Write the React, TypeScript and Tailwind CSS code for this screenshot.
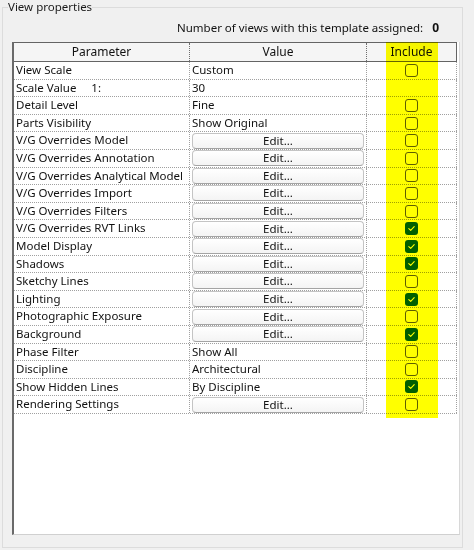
import React from "react";

type Row = { p: string; v: string; edit?: boolean; inc: null | boolean };

const rows: Row[] = [
  { p: "View Scale", v: "Custom", inc: false },
  { p: "Scale Value     1:", v: "30", inc: null },
  { p: "Detail Level", v: "Fine", inc: false },
  { p: "Parts Visibility", v: "Show Original", inc: false },
  { p: "V/G Overrides Model", v: "", edit: true, inc: false },
  { p: "V/G Overrides Annotation", v: "", edit: true, inc: false },
  { p: "V/G Overrides Analytical Model", v: "", edit: true, inc: false },
  { p: "V/G Overrides Import", v: "", edit: true, inc: false },
  { p: "V/G Overrides Filters", v: "", edit: true, inc: false },
  { p: "V/G Overrides RVT Links", v: "", edit: true, inc: true },
  { p: "Model Display", v: "", edit: true, inc: true },
  { p: "Shadows", v: "", edit: true, inc: true },
  { p: "Sketchy Lines", v: "", edit: true, inc: false },
  { p: "Lighting", v: "", edit: true, inc: true },
  { p: "Photographic Exposure", v: "", edit: true, inc: false },
  { p: "Background", v: "", edit: true, inc: true },
  { p: "Phase Filter", v: "Show All", inc: false },
  { p: "Discipline", v: "Architectural", inc: false },
  { p: "Show Hidden Lines", v: "By Discipline", inc: true },
  { p: "Rendering Settings", v: "", edit: true, inc: false },
];

function Check({ on }: { on: boolean }) {
  if (on) {
    return (
      <div className="w-[13px] h-[13px] rounded-[3px] bg-[#005fb8] flex items-center justify-center">
        <svg width="9" height="9" viewBox="0 0 9 9">
          <path d="M1.8 4.6 L3.7 6.4 L7.2 2.6" fill="none" stroke="#ffffff" strokeWidth="1.1" strokeLinecap="round" strokeLinejoin="round" />
        </svg>
      </div>
    );
  }
  return <div className="w-[13px] h-[13px] rounded-[3px] border border-[#5e5e5e] bg-white" />;
}

export default function App() {
  return (
    <div
      className="w-[474px] h-[550px] bg-[#f0f0f0] pl-[2px] text-[#111111] overflow-hidden"
      style={{ fontFamily: '"Noto Sans", "Open Sans", sans-serif' }}
    >
      <fieldset className="w-[461px] h-[548px] border border-[#dcdcdc] pl-[9px] pr-[2px]">
        <legend className="ml-[-4px] text-[11.5px] leading-[14px] text-[#1a1a1a]">View properties</legend>
        <div className="h-[28px] flex justify-end items-start pt-[6px] pr-[21px] text-[11.5px] leading-[16px]">
          <span>Number of views with this template assigned:</span>
          <span className="ml-[9px] font-bold text-[12px]">0</span>
        </div>
        <div className="relative w-[448px] h-[493px] bg-white border-l-2 border-l-[#6a6a6a] border-r border-r-[#d8d8d8] border-b border-b-[#d0d0d0] text-[11.5px]">
          <div className="flex w-[443px] h-[20px] border-t border-b border-r border-[#646464] bg-[#f5f5f5] leading-[18px] text-[12px]">
            <div className="w-[176px] border-r border-dotted border-[#6e6e6e] text-center">Parameter</div>
            <div className="w-[177px] border-r border-dotted border-[#6e6e6e] text-center">Value</div>
            <div className="flex-1 text-center">Include</div>
          </div>
          {rows.map((r, i) => (
            <div key={i} className="flex w-[443px] h-[17.6px] border-b border-dotted border-[#a0a0a0] leading-[16px]">
              <div className="w-[176px] border-r border-dotted border-[#a0a0a0] pl-[2px] whitespace-pre">{r.p}</div>
              <div className="w-[177px] border-r border-dotted border-[#a0a0a0] flex items-center">
                {r.edit ? (
                  <div className="ml-[2px] w-[172px] h-[16px] rounded-[4px] border border-[#c4c4c4] border-b-[#a4a4a4] bg-gradient-to-b from-white to-[#f4f4f4] text-center leading-[14px]">
                    Edit...
                  </div>
                ) : (
                  <span className="pl-[2px]">{r.v}</span>
                )}
              </div>
              <div className="flex-1 border-r border-dotted border-[#a0a0a0] flex items-center justify-center">
                {r.inc !== null && <Check on={r.inc} />}
              </div>
            </div>
          ))}
          <div className="absolute top-0 left-[372px] w-[52px] h-[376px] bg-[#ffff00] mix-blend-multiply" />
        </div>
      </fieldset>
    </div>
  );
}
